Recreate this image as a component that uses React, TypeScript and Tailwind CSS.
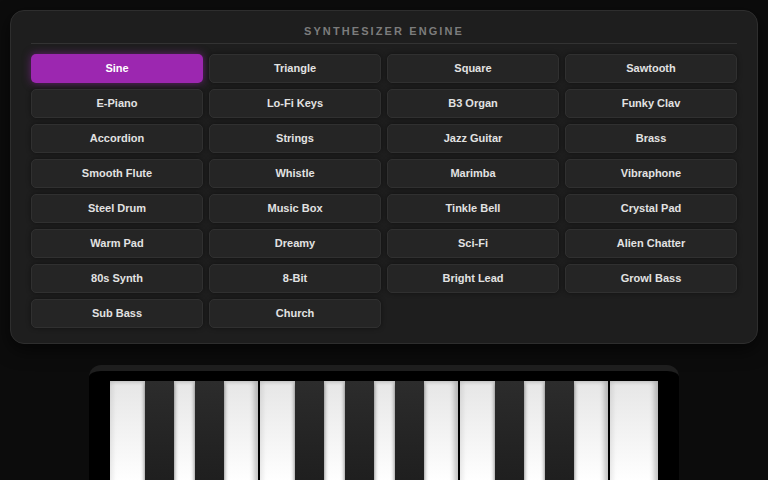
import React from 'react';

const presets = [
  'Sine', 'Triangle', 'Square', 'Sawtooth',
  'E-Piano', 'Lo-Fi Keys', 'B3 Organ', 'Funky Clav',
  'Accordion', 'Strings', 'Jazz Guitar', 'Brass',
  'Smooth Flute', 'Whistle', 'Marimba', 'Vibraphone',
  'Steel Drum', 'Music Box', 'Tinkle Bell', 'Crystal Pad',
  'Warm Pad', 'Dreamy', 'Sci-Fi', 'Alien Chatter',
  '80s Synth', '8-Bit', 'Bright Lead', 'Growl Bass',
  'Sub Bass', 'Church',
];

// index of the white key each black key sits after
const blackAfter = [1, 2, 4, 5, 6, 8, 9];

const App: React.FC = () => {
  return (
    <div
      className="min-h-[480px] bg-[#0c0c0c] px-[10px] pt-[10px] overflow-hidden"
      style={{ fontFamily: '"Liberation Sans", Arial, sans-serif' }}
    >
      <section className="rounded-[14px] border border-[#2e2e2e] bg-[#1e1e1e] px-[20px] pt-[14px] pb-[15px] shadow-[0_6px_18px_rgba(0,0,0,0.6)]">
        <h2 className="text-center text-[11px] font-bold tracking-[2.1px] text-[#7c7c7c] pb-[6px] border-b border-[#333] mb-[10px] leading-[12px]">
          SYNTHESIZER ENGINE
        </h2>

        <div className="grid grid-cols-4 gap-[6px]">
          {presets.map((name, i) => (
            <button
              key={name}
              className={
                i === 0
                  ? 'h-[29px] rounded-[5px] bg-[#9c27b0] text-[11px] font-bold text-white shadow-[0_0_8px_rgba(156,39,176,0.55)]'
                  : 'h-[29px] rounded-[5px] border border-[#303030] bg-[#252525] text-[11px] font-bold text-[#e2e2e2] shadow-[0_0_5px_rgba(0,0,0,0.45)]'
              }
            >
              {name}
            </button>
          ))}
        </div>
      </section>

      <div className="mx-auto mt-[21px] w-[590px] rounded-t-[12px] border-t-[6px] border-[#1e1e1e] bg-black px-[21px] pt-[10px]">
        <div className="relative flex gap-[2px]">
          {Array.from({ length: 11 }).map((_, i) => (
            <div
              key={i}
              className="h-[200px] w-[48px] rounded-b-[4px] bg-gradient-to-b from-[#e6e6e6] via-white to-white shadow-[inset_-4px_0_5px_rgba(0,0,0,0.22),inset_3px_0_4px_rgba(0,0,0,0.08)]"
            />
          ))}
          {blackAfter.map((n) => (
            <div
              key={n}
              className="absolute top-0 h-[120px] w-[29px] rounded-b-[3px] bg-gradient-to-b from-[#2c2c2c] to-[#1c1c1c] shadow-[0_2px_4px_rgba(0,0,0,0.6)]"
              style={{ left: n * 50 - 15 }}
            />
          ))}
        </div>
      </div>
    </div>
  );
};

export default App;
